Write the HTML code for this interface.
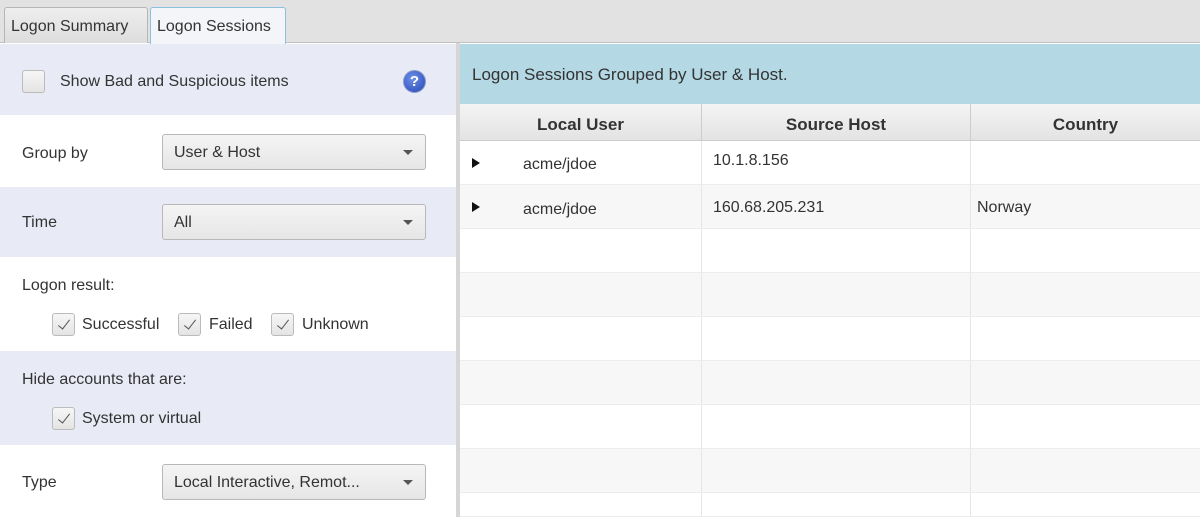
<!DOCTYPE html>
<html><head><style>
*{margin:0;padding:0;box-sizing:border-box}
html,body{width:1200px;height:517px;overflow:hidden}
body{background:#fff;font-family:"Liberation Sans",sans-serif;font-size:16px;color:#333;position:relative}
.a{position:absolute}
.tab{position:absolute;top:7px;height:36px;border:1px solid #b5b5b5;border-bottom:none;border-radius:3px 3px 0 0;padding:10px 6px 0;font-size:16px;color:#333}
.band{position:absolute;left:0;width:456px}
.lt{background:#e8ebf5}
.dd{position:absolute;left:162px;width:264px;height:36px;border:1px solid #b8b8b8;border-radius:3px;background:linear-gradient(#f4f4f4,#e6e6e6);padding:9px 11px;font-size:16px}
.dd:after{content:"";position:absolute;right:12px;top:15px;border-left:5px solid transparent;border-right:5px solid transparent;border-top:5px solid #555}
.cb{position:absolute;width:23px;height:23px;border:1px solid #bbb;border-radius:3px;background:linear-gradient(#f6f6f6,#e4e4e4)}
.cb.c:after{content:"";position:absolute;left:8px;top:3px;width:5px;height:11px;border-right:1.5px solid #555;border-bottom:1.5px solid #555;transform:rotate(38deg)}
.row{position:absolute;left:460px;width:740px;height:44px;border-bottom:1px solid #ececec}
.vs{position:absolute;top:0;width:1px;height:100%;background:#e6e6e6}
.th{position:absolute;top:104px;height:37px;background:linear-gradient(#f4f4f4,#e3e3e3);border-right:1px solid #ccc;border-bottom:1px solid #ccc;font-weight:bold;text-align:center;padding-top:11px;font-size:17px;color:#333}
.arr{position:absolute;left:12px;top:17px;border-top:5px solid transparent;border-bottom:5px solid transparent;border-left:8px solid #111}
</style></head><body>
<div class="a" style="left:0;top:0;width:1200px;height:43px;background:#e2e2e2;border-bottom:1px solid #c0c0c0"></div>
<div class="tab" style="left:4px;width:144px;background:linear-gradient(#eee,#ddd)">Logon Summary</div>
<div class="tab" style="left:150px;width:136px;background:#f4f5f8;border-color:#8ac0de;height:37px">Logon Sessions</div>

<div class="band lt" style="top:44px;height:71px"></div>
<div class="cb" style="left:22px;top:70px"></div>
<div class="a" style="left:60px;top:73px">Show Bad and Suspicious items</div>
<div class="a" style="left:403px;top:70px;width:23px;height:23px;border-radius:50%;background:radial-gradient(circle at 40% 35%,#6f8fe8,#2447b5);border:1px solid #8a9bc9;color:#fff;font-weight:bold;font-size:15px;text-align:center;line-height:21px">?</div>

<div class="a" style="left:22px;top:145px">Group by</div>
<div class="dd" style="top:134px">User &amp; Host</div>

<div class="band lt" style="top:187px;height:70px"></div>
<div class="a" style="left:22px;top:214px">Time</div>
<div class="dd" style="top:204px">All</div>

<div class="a" style="left:22px;top:277px">Logon result:</div>
<div class="cb c" style="left:52px;top:313px"></div><div class="a" style="left:82px;top:316px">Successful</div>
<div class="cb c" style="left:178px;top:313px"></div><div class="a" style="left:209px;top:316px">Failed</div>
<div class="cb c" style="left:271px;top:313px"></div><div class="a" style="left:302px;top:316px">Unknown</div>

<div class="band lt" style="top:351px;height:94px"></div>
<div class="a" style="left:22px;top:371px">Hide accounts that are:</div>
<div class="cb c" style="left:52px;top:407px"></div><div class="a" style="left:82px;top:410px">System or virtual</div>

<div class="a" style="left:22px;top:474px">Type</div>
<div class="dd" style="top:464px">Local Interactive, Remot...</div>

<div class="a" style="left:456px;top:43px;width:4px;height:474px;background:#d6d6d6"></div>

<div class="a" style="left:460px;top:44px;width:740px;height:60px;background:#b4d8e4;padding:21px 12px;font-size:17px;color:#333">Logon Sessions Grouped by User &amp; Host.</div>
<div class="th" style="left:460px;width:242px">Local User</div>
<div class="th" style="left:702px;width:269px">Source Host</div>
<div class="th" style="left:971px;width:229px;border-right:none">Country</div>

<div class="row" style="top:141px;background:#fff"><div class="vs" style="left:241px"></div><div class="vs" style="left:510px"></div><div class="arr"></div><div class="a" style="left:63px;top:15px">acme/jdoe</div><div class="a" style="left:253px;top:11px">10.1.8.156</div></div>
<div class="row" style="top:185px;background:#f7f7f7"><div class="vs" style="left:241px"></div><div class="vs" style="left:510px"></div><div class="arr"></div><div class="a" style="left:63px;top:16px">acme/jdoe</div><div class="a" style="left:253px;top:14px">160.68.205.231</div><div class="a" style="left:517px;top:14px">Norway</div></div>
<div class="row" style="top:229px;background:#fff"><div class="vs" style="left:241px"></div><div class="vs" style="left:510px"></div></div>
<div class="row" style="top:273px;background:#f7f7f7"><div class="vs" style="left:241px"></div><div class="vs" style="left:510px"></div></div>
<div class="row" style="top:317px;background:#fff"><div class="vs" style="left:241px"></div><div class="vs" style="left:510px"></div></div>
<div class="row" style="top:361px;background:#f7f7f7"><div class="vs" style="left:241px"></div><div class="vs" style="left:510px"></div></div>
<div class="row" style="top:405px;background:#fff"><div class="vs" style="left:241px"></div><div class="vs" style="left:510px"></div></div>
<div class="row" style="top:449px;background:#f7f7f7"><div class="vs" style="left:241px"></div><div class="vs" style="left:510px"></div></div>
<div class="row" style="top:493px;height:24px;background:#fff"><div class="vs" style="left:241px"></div><div class="vs" style="left:510px"></div></div>
</body></html>
